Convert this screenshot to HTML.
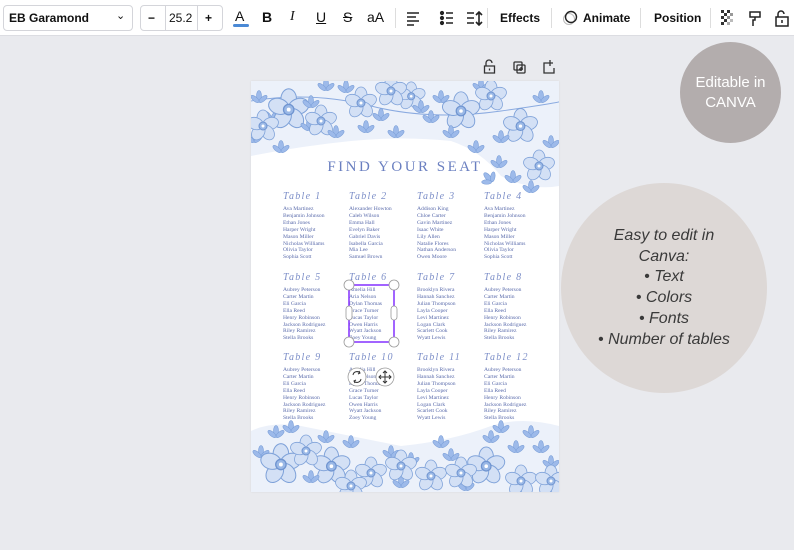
<!DOCTYPE html>
<html><head><meta charset="utf-8"><style>
*{margin:0;padding:0;box-sizing:border-box}
body{width:794px;height:550px;background:#e9eaee;font-family:"Liberation Sans",sans-serif;position:relative;overflow:hidden}
.tb{position:absolute;left:0;top:0;width:794px;height:36px;background:#fff;border-bottom:1px solid #dcdde2}
.box{position:absolute;border:1px solid #d4d5da;border-radius:4px;height:26px;top:5px}
.t{position:absolute;font-size:12px;color:#111;top:11px}
.b{font-weight:bold}
.page{position:absolute;left:251px;top:81px;width:308px;height:411px;background:#fff;box-shadow:0 0 2px rgba(0,0,0,.08);overflow:hidden}
.col{position:absolute;font-family:"Liberation Serif",serif;color:#5a6bab;font-size:5.6px;line-height:6.9px}
.col h4{font-style:italic;font-weight:normal;font-size:10px;letter-spacing:1.3px;color:#7d8fc8;line-height:12px;margin-bottom:3px}
.circ{position:absolute;border-radius:50%;text-align:center;color:#fff}
</style></head><body>
<div class="tb">
 <div class="box" style="left:3px;width:130px"></div>
 <div class="t b" style="left:9px;font-weight:600">EB Garamond</div>
 <div class="t" style="left:116px;top:9px;font-size:11px">&#8964;</div>
 <div class="box" style="left:140px;width:83px"></div>
 <div style="position:absolute;left:165px;top:5px;width:1px;height:26px;background:#d4d5da"></div>
 <div style="position:absolute;left:197px;top:5px;width:1px;height:26px;background:#d4d5da"></div>
 <div class="t b" style="left:148px">−</div>
 <div class="t" style="left:169px">25.2</div>
 <div class="t b" style="left:205px">+</div>
 <div class="t" style="left:235px;font-size:14px;top:8px">A</div>
 <div style="position:absolute;left:233px;top:24px;width:16px;height:3px;background:#4b8ad6;border-radius:2px"></div>
 <div class="t b" style="left:262px;font-size:14px;top:9px">B</div>
 <div class="t" style="left:290px;font-size:14px;top:9px;font-style:italic;font-family:'Liberation Serif',serif">I</div>
 <div class="t" style="left:316px;font-size:14px;top:9px;text-decoration:underline">U</div>
 <div class="t" style="left:343px;font-size:14px;top:9px;text-decoration:line-through">S</div>
 <div class="t" style="left:367px;font-size:14px;top:9px">aA</div>
 <div style="position:absolute;left:395px;top:8px;width:1px;height:20px;background:#ddd"></div>
 <svg style="position:absolute;left:405px;top:10px" width="90" height="16" stroke="#222" stroke-width="1.6" fill="none">
  <path d="M2 3h12M2 7h9M2 11h12M2 15h7"/>
  <circle cx="37" cy="3" r="1.3" fill="#222"/><circle cx="37" cy="8" r="1.3" fill="#222"/><circle cx="37" cy="13" r="1.3" fill="#222"/>
  <path d="M41 3h7M41 8h7M41 13h7M62 3h7M62 8h7M62 13h7M74 2v13M71 5l3-3 3 3M71 12l3 3 3-3"/>
 </svg>
 <div style="position:absolute;left:487px;top:8px;width:1px;height:20px;background:#ddd"></div>
 <div class="t" style="left:500px;font-weight:600">Effects</div>
 <div style="position:absolute;left:551px;top:8px;width:1px;height:20px;background:#ddd"></div>
 <svg style="position:absolute;left:562px;top:9px" width="18" height="18" fill="none"><circle cx="7" cy="10" r="5.5" stroke="#bbb"/><circle cx="9" cy="8" r="5.5" stroke="#222" stroke-width="1.4"/></svg>
 <div class="t" style="left:583px;font-weight:600">Animate</div>
 <div style="position:absolute;left:640px;top:8px;width:1px;height:20px;background:#ddd"></div>
 <div class="t" style="left:654px;font-weight:600">Position</div>
 <div style="position:absolute;left:710px;top:8px;width:1px;height:20px;background:#ddd"></div>
 <svg style="position:absolute;left:721px;top:10px" width="70" height="18">
  <g fill="#333"><rect x="0" y="0" width="3" height="3"/><rect x="6" y="0" width="3" height="3"/><rect x="3" y="3" width="3" height="3"/><rect x="9" y="3" width="3" height="3" fill="#999"/><rect x="0" y="6" width="3" height="3"/><rect x="6" y="6" width="3" height="3" fill="#888"/><rect x="3" y="9" width="3" height="3"/><rect x="9" y="9" width="3" height="3" fill="#bbb"/><rect x="0" y="12" width="3" height="3"/><rect x="6" y="12" width="3" height="3" fill="#aaa"/></g>
  <path d="M29 2h10v5H29zM34 7v3h-2v6" stroke="#222" stroke-width="1.5" fill="none"/>
  <path d="M57 7v-3a3 3 0 016 0M55 7h12v9H55zM61 10v3" stroke="#222" stroke-width="1.5" fill="none"/>
 </svg>
</div>

<svg style="position:absolute;left:483px;top:59px" width="72" height="16" stroke="#333" stroke-width="1.3" fill="none">
 <path d="M3 7V4a3 3 0 016 0M1.5 7h10v7h-10zM6.5 9.5v2"/>
 <rect x="31" y="3" width="8" height="8" rx="1"/><rect x="34" y="6" width="8" height="8" rx="1"/><path d="M38 8v4M36 10h4"/>
 <path d="M66 4h-5v10h10V9M67 1v6M64 4h6"/>
</svg>

<div class="page">
<svg width="308" height="411" style="position:absolute;left:0;top:0">
 <defs>
  <g id="fl"><g fill="#d3e0f5" stroke="#7fa2d9" stroke-width=".8">
   <ellipse cx="0" cy="-8" rx="6" ry="8"/><ellipse cx="0" cy="-8" rx="6" ry="8" transform="rotate(72)"/><ellipse cx="0" cy="-8" rx="6" ry="8" transform="rotate(144)"/><ellipse cx="0" cy="-8" rx="6" ry="8" transform="rotate(216)"/><ellipse cx="0" cy="-8" rx="6" ry="8" transform="rotate(288)"/></g>
   <circle r="4" fill="#9ab8e6" stroke="#6f94d0"/><circle r="1.5" fill="#fff"/></g>
  <g id="lf"><ellipse cx="0" cy="-5" rx="2.5" ry="5.5" fill="#9dbaea" stroke="#7b9fd8" stroke-width=".6"/><ellipse cx="4" cy="-2" rx="2.2" ry="5" transform="rotate(50 4 -2)" fill="#9dbaea" stroke="#7b9fd8" stroke-width=".6"/><ellipse cx="-4" cy="-2" rx="2.2" ry="5" transform="rotate(-50 -4 -2)" fill="#9dbaea" stroke="#7b9fd8" stroke-width=".6"/></g>
 </defs>
 <path d="M0 0H308V105Q280 110 250 95Q230 70 200 60Q150 55 100 60Q50 65 0 75Z" fill="#dfe8f7" opacity=".6"/>
 <path d="M0 411H308V345Q270 335 240 345Q200 360 150 365Q100 355 50 345Q20 340 0 350Z" fill="#dfe8f7" opacity=".6"/>
 <g>
  <path d="M0 20 Q60 10 120 25 T250 30 T308 20" stroke="#8aaae0" fill="none"/>
  <use href="#lf" x="8" y="20"/><use href="#lf" x="20" y="40" transform="rotate(-30 20 40)"/><use href="#lf" x="3" y="60"/>
  <use href="#fl" x="38" y="28" transform="scale(1.3) translate(-9 -6)"/>
  <use href="#lf" x="60" y="25"/><use href="#lf" x="75" y="8"/><use href="#lf" x="58" y="48"/><use href="#lf" x="30" y="70"/>
  <use href="#fl" x="110" y="22"/><use href="#lf" x="95" y="10"/><use href="#lf" x="130" y="38"/><use href="#lf" x="145" y="55"/>
  <use href="#fl" x="160" y="15" transform="scale(.9) translate(18 2)"/>
  <use href="#fl" x="210" y="30" transform="scale(1.2) translate(-35 -5)"/><use href="#lf" x="190" y="20"/><use href="#lf" x="230" y="8"/>
  <use href="#fl" x="270" y="45" transform="scale(1.1) translate(-25 -4)"/><use href="#lf" x="250" y="60"/><use href="#lf" x="290" y="20"/><use href="#lf" x="300" y="65"/>
  <use href="#lf" x="248" y="85"/><use href="#lf" x="262" y="100"/><use href="#lf" x="240" y="100" transform="rotate(-40 240 100)"/>
  <use href="#fl" x="288" y="85"/><use href="#lf" x="280" y="110"/>
  <use href="#lf" x="180" y="40"/><use href="#lf" x="200" y="55"/>
  <use href="#fl" x="70" y="40"/><use href="#fl" x="140" y="10"/><use href="#fl" x="240" y="15"/><use href="#fl" x="12" y="45"/>
  <use href="#lf" x="85" y="55"/><use href="#lf" x="115" y="50"/><use href="#lf" x="170" y="30"/><use href="#lf" x="225" y="70"/>
 </g>
 <g>
  <use href="#lf" x="10" y="375"/><use href="#lf" x="25" y="355"/><use href="#lf" x="40" y="350"/>
  <use href="#fl" x="30" y="385" transform="scale(1.3) translate(-7 -90)"/>
  <use href="#fl" x="80" y="385" transform="scale(1.2) translate(-13 -64)"/><use href="#lf" x="100" y="365"/>
  <use href="#fl" x="120" y="392"/><use href="#lf" x="140" y="375"/><use href="#lf" x="160" y="382"/>
  <use href="#fl" x="180" y="395"/><use href="#lf" x="200" y="378"/>
  <use href="#fl" x="235" y="385" transform="scale(1.2) translate(-39 -64)"/><use href="#lf" x="240" y="360"/><use href="#lf" x="250" y="350"/>
  <use href="#fl" x="270" y="400"/><use href="#lf" x="290" y="370"/><use href="#lf" x="300" y="385"/><use href="#lf" x="280" y="355"/>
  <use href="#lf" x="60" y="400"/><use href="#lf" x="150" y="405"/><use href="#lf" x="215" y="408"/>
  <use href="#fl" x="55" y="370"/><use href="#fl" x="150" y="385"/><use href="#fl" x="210" y="392"/><use href="#fl" x="300" y="400"/><use href="#fl" x="100" y="405"/>
  <use href="#lf" x="75" y="360"/><use href="#lf" x="190" y="365"/><use href="#lf" x="265" y="370"/>
 </g>
</svg>
<div style="position:absolute;left:0;width:308px;top:78px;text-align:center;font-family:'Liberation Serif',serif;font-size:15px;letter-spacing:2.5px;color:#6a7fc0">FIND YOUR SEAT</div>

<div class="col" style="left:32px;top:110px"><h4>Table 1</h4>Ava Martinez<br>Benjamin Johnson<br>Ethan Jones<br>Harper Wright<br>Mason Miller<br>Nicholas Williams<br>Olivia Taylor<br>Sophia Scott</div>
<div class="col" style="left:98px;top:110px"><h4>Table 2</h4>Alexander Howton<br>Caleb Wilson<br>Emma Hall<br>Evelyn Baker<br>Gabriel Davis<br>Isabella Garcia<br>Mia Lee<br>Samuel Brown</div>
<div class="col" style="left:166px;top:110px"><h4>Table 3</h4>Addison King<br>Chloe Carter<br>Gavin Martinez<br>Isaac White<br>Lily Allen<br>Natalie Flores<br>Nathan Anderson<br>Owen Moore</div>
<div class="col" style="left:233px;top:110px"><h4>Table 4</h4>Ava Martinez<br>Benjamin Johnson<br>Ethan Jones<br>Harper Wright<br>Mason Miller<br>Nicholas Williams<br>Olivia Taylor<br>Sophia Scott</div>

<div class="col" style="left:32px;top:191px"><h4>Table 5</h4>Aubrey Peterson<br>Carter Martin<br>Eli Garcia<br>Ella Reed<br>Henry Robinson<br>Jackson Rodriguez<br>Riley Ramirez<br>Stella Brooks</div>
<div class="col" style="left:98px;top:191px"><h4>Table 6</h4>Amelia Hill<br>Aria Nelson<br>Dylan Thomas<br>Grace Turner<br>Lucas Taylor<br>Owen Harris<br>Wyatt Jackson<br>Zoey Young</div>
<div class="col" style="left:166px;top:191px"><h4>Table 7</h4>Brooklyn Rivera<br>Hannah Sanchez<br>Julian Thompson<br>Layla Cooper<br>Levi Martinez<br>Logan Clark<br>Scarlett Cook<br>Wyatt Lewis</div>
<div class="col" style="left:233px;top:191px"><h4>Table 8</h4>Aubrey Peterson<br>Carter Martin<br>Eli Garcia<br>Ella Reed<br>Henry Robinson<br>Jackson Rodriguez<br>Riley Ramirez<br>Stella Brooks</div>

<div class="col" style="left:32px;top:271px"><h4>Table 9</h4>Aubrey Peterson<br>Carter Martin<br>Eli Garcia<br>Ella Reed<br>Henry Robinson<br>Jackson Rodriguez<br>Riley Ramirez<br>Stella Brooks</div>
<div class="col" style="left:98px;top:271px"><h4>Table 10</h4>Amelia Hill<br>Aria Nelson<br>Dylan Thomas<br>Grace Turner<br>Lucas Taylor<br>Owen Harris<br>Wyatt Jackson<br>Zoey Young</div>
<div class="col" style="left:166px;top:271px"><h4>Table 11</h4>Brooklyn Rivera<br>Hannah Sanchez<br>Julian Thompson<br>Layla Cooper<br>Levi Martinez<br>Logan Clark<br>Scarlett Cook<br>Wyatt Lewis</div>
<div class="col" style="left:233px;top:271px"><h4>Table 12</h4>Aubrey Peterson<br>Carter Martin<br>Eli Garcia<br>Ella Reed<br>Henry Robinson<br>Jackson Rodriguez<br>Riley Ramirez<br>Stella Brooks</div>
</div>

<svg style="position:absolute;left:340px;top:278px" width="65" height="115">
 <rect x="9" y="7" width="45" height="57" fill="none" stroke="#8b3dff" stroke-width="1.6"/>
 <g fill="#fff" stroke="#999" stroke-width=".8">
  <circle cx="9" cy="7" r="5"/><circle cx="54" cy="7" r="5"/><circle cx="9" cy="64" r="5"/><circle cx="54" cy="64" r="5"/>
  <rect x="51" y="28" width="6" height="14" rx="3"/><rect x="6" y="28" width="6" height="14" rx="3"/>
  <circle cx="17" cy="99" r="9"/><circle cx="45" cy="99" r="9"/>
 </g>
 <path d="M13 97a4 4 0 017-2M21 101a4 4 0 01-7 2M19 93l1 2-2 1M15 105l-1-2 2-1" stroke="#333" stroke-width="1" fill="none"/>
 <path d="M45 93v12M39 99h12M43 95l2-2 2 2M43 103l2 2 2-2M41 97l-2 2 2 2M49 97l2 2-2 2" stroke="#333" stroke-width="1" fill="none"/>
</svg>

<div class="circ" style="left:680px;top:42px;width:101px;height:101px;background:#b3adad;font-size:15px;line-height:20px;padding-top:31px">Editable in<br>CANVA</div>
<div class="circ" style="left:561px;top:183px;width:206px;height:210px;background:#ddd8d6;color:#3a3a3a;font-style:italic;font-size:16px;line-height:20.7px;padding-top:43px">Easy to edit in<br>Canva:<br>• Text<br>• Colors<br>• Fonts<br>• Number of tables</div>
</body></html>
